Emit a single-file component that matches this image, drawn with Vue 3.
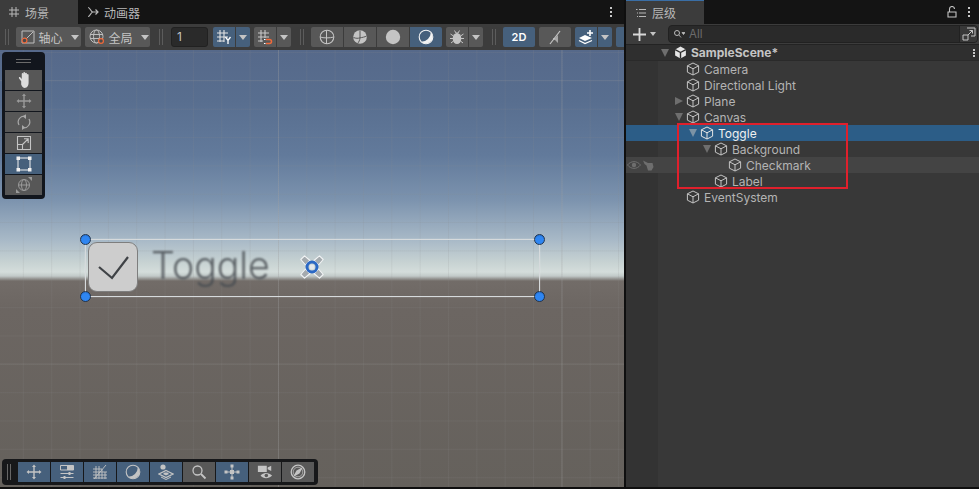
<script setup>
const rows = [
  { name: 'Camera', depth: 0 },
  { name: 'Directional Light', depth: 0 },
  { name: 'Plane', depth: 0, arrow: 'right' },
  { name: 'Canvas', depth: 0, arrow: 'down' },
  { name: 'Toggle', depth: 1, arrow: 'down', selected: true },
  { name: 'Background', depth: 2, arrow: 'down' },
  { name: 'Checkmark', depth: 3, hover: true },
  { name: 'Label', depth: 2 },
  { name: 'EventSystem', depth: 0 }
]

const tools = ['hand', 'move', 'rotate', 'scale', 'rect', 'transform']
const overlays = [
  { icon: 'move', on: true },
  { icon: 'sliders', on: true },
  { icon: 'gridsnap', on: true },
  { icon: 'moon', on: true },
  { icon: 'layers', on: true },
  { icon: 'search', on: false },
  { icon: 'nodes', on: true },
  { icon: 'camera', on: false },
  { icon: 'compass', on: false }
]
const shading = [
  { icon: 'wire', on: false },
  { icon: 'shaded', on: false },
  { icon: 'disc', on: false },
  { icon: 'moon', on: true }
]
const handles = [
  { left: '85px', top: '239px' },
  { left: '539px', top: '239px' },
  { left: '85px', top: '296px' },
  { left: '539px', top: '296px' }
]
</script>

<template>
  <div class="editor">
    <svg class="defs" width="0" height="0">
      <symbol id="cube" viewBox="0 0 14 14">
        <path d="M7 1 12.6 3.8V10.2L7 13 1.4 10.2V3.8ZM1.4 3.8 7 6.8 12.6 3.8M7 6.8V13" fill="none" stroke="currentColor" stroke-width="1" />
      </symbol>
      <symbol id="hand" viewBox="1 0 12 16">
        <path d="M4.500 9 2.600 6.600C2 5.700 3 5 3.700 5.600L5 7V2.600C5 1.500 6.300 1.500 6.400 2.600V1.700C6.400.6 7.900.6 8 1.700V2.300C8.100 1.300 9.500 1.300 9.600 2.400V3.400C9.700 2.500 11 2.500 11.100 3.500V10C11.100 13 10 15 7.500 15 5.700 15 5.200 13.500 4.500 12Z" fill="currentColor" />
      </symbol>
      <symbol id="move" viewBox="0 0 16 16">
        <path d="M8 3V13M3 8H13" stroke="currentColor" stroke-width="1.400" />
        <path d="M8 .5 10 3H6ZM8 15.500 6 13H10ZM.5 8 3 6V10ZM15.500 8 13 10V6Z" fill="currentColor" />
      </symbol>
      <symbol id="rotate" viewBox="0 0 16 16">
        <path d="M3 11A6 6 0 0 1 9.500 2.200M13 5A6 6 0 0 1 6.500 13.800" fill="none" stroke="currentColor" stroke-width="1.200" />
        <path d="M10 .2V5L6.800 2.500ZM6 11 9.200 13.500 6 16Z" fill="currentColor" />
      </symbol>
      <symbol id="scale" viewBox="0 0 16 16">
        <path d="M1.500 1.500H14.500V14.500H1.500ZM1.500 9.500H6.500V14.500M6.500 9.500 12 4M8 3.800H12.200V8" fill="none" stroke="currentColor" stroke-width="1.100" />
      </symbol>
      <symbol id="rect" viewBox="0 0 16 16">
        <path d="M2 2H14V14H2Z" fill="none" stroke="currentColor" stroke-width="1" />
        <path d="M.5.5H4V4H.5ZM12 .5H15.500V4H12ZM.5 12H4V15.500H.5ZM12 12H15.500V15.500H12Z" fill="currentColor" />
      </symbol>
      <symbol id="transform" viewBox="0 0 16 16">
        <circle cx="8" cy="8" r="5.500" fill="none" stroke="currentColor" />
        <ellipse cx="8" cy="8" rx="2.500" ry="5.500" fill="none" stroke="currentColor" />
        <path d="M2.500 8H13.500" stroke="currentColor" />
        <path d="M0 16V12L4 16ZM16 0V4L12 0Z" fill="currentColor" />
      </symbol>
      <symbol id="sliders" viewBox="0 0 16 16">
        <path d="M1.500 1.500H14.500V6H1.500Z" fill="none" stroke="currentColor" />
        <path d="M8 1.500H14.500V6H8Z" fill="currentColor" />
        <path d="M1.500 9.500H14.500M1.500 13.500H14.500" stroke="currentColor" />
        <path d="M9.500 8H11.500V11H9.500ZM4.500 12H6.500V15H4.500Z" fill="currentColor" />
      </symbol>
      <symbol id="gridsnap" viewBox="0 0 16 16">
        <path d="M4 2V15M7 2V15M10 5V15M13 8V15M1 5H10M1 8H15M1 11H15M1 14H15M2 15 14 1" fill="none" stroke="currentColor" stroke-width=".9" />
      </symbol>
      <symbol id="moon" viewBox="0 0 16 16">
        <circle cx="8" cy="8" r="6.800" fill="none" stroke="currentColor" stroke-width="1.100" />
        <path d="M12.800 3.200A6.800 6.800 0 0 1 3.200 12.800 9.650 9.650 0 0 0 12.800 3.200Z" fill="currentColor" />
      </symbol>
      <symbol id="layers" viewBox="0 0 16 16">
        <circle cx="5" cy="3" r="2.600" fill="currentColor" />
        <path d="M8 6.500 15 10 8 13.500 1 10Z" fill="none" stroke="currentColor" stroke-width="1.300" />
        <path d="M6.500 8.500 9.500 8.500 11 10 8 11.500 5 10Z" fill="currentColor" />
        <path d="M3 13 8 15.500 13 13" fill="none" stroke="currentColor" />
      </symbol>
      <symbol id="search" viewBox="0 0 16 16">
        <circle cx="6.500" cy="6.500" r="4.500" fill="none" stroke="currentColor" stroke-width="1.300" />
        <path d="M10 10 14.500 14.500" stroke="currentColor" stroke-width="1.800" />
      </symbol>
      <symbol id="nodes" viewBox="0 0 16 16">
        <path d="M8 8H1M8 8H15M8 8V1M8 8V15" stroke="currentColor" />
        <path d="M6 6H10V10H6ZM6.500 .5H9.500V3.500H6.500ZM6.500 12.500H9.500V15.500H6.500ZM.5 6.500H3.500V9.500H.5ZM12.500 6.500H15.500V9.500H12.500Z" fill="currentColor" />
      </symbol>
      <symbol id="camera" viewBox="0 0 18 16">
        <path d="M1 1H11V8H1ZM12 3 16 1V7L12 5Z" fill="currentColor" />
        <path d="M4 12C7 8 13 8 17 12 13 16 7 16 4 12Z" fill="currentColor" />
        <circle cx="10.500" cy="12" r="2" fill="#585858" />
      </symbol>
      <symbol id="compass" viewBox="0 0 16 16">
        <circle cx="8" cy="8" r="6.800" fill="none" stroke="currentColor" stroke-width="1.300" />
        <path d="M13 3 9.500 9.500 3 13 6.500 6.500Z" fill="currentColor" />
        <circle cx="8" cy="8" r="4.800" fill="none" stroke="currentColor" stroke-width=".7" />
      </symbol>
      <symbol id="wire" viewBox="0 0 16 16">
        <circle cx="8" cy="8" r="6.800" fill="none" stroke="currentColor" stroke-width="1.100" />
        <path d="M7.500 1.200V15M1.200 8C4 9.200 11 9.200 14.800 8" fill="none" stroke="currentColor" stroke-width="1" />
      </symbol>
      <symbol id="shaded" viewBox="0 0 16 16">
        <circle cx="8" cy="8" r="6.800" fill="currentColor" />
        <path d="M1.500 8.500C4 9.500 6 9.500 8 8.800V1.500M8 8.800C7.800 11 7 13 5.500 14.500M8 8.800C10 8.500 13 8 14.500 7" fill="none" stroke="#585858" stroke-width="1" />
      </symbol>
      <symbol id="disc" viewBox="0 0 16 16">
        <circle cx="8" cy="8" r="7.200" fill="currentColor" />
      </symbol>
    </svg>

    <section class="scene-panel">
      <div class="tabs">
        <div class="tab active first-tab">
          <svg class="tab-icon" viewBox="0 0 12 12"><path d="M1 4H11M1 8H11M4 1V11M8 1V11" stroke="currentColor" fill="none" /></svg>
          <span>场景</span>
        </div>
        <div class="tab">
          <svg class="tab-icon" viewBox="0 0 12 12"><path d="M1 1.500C3.500 1.500 3.500 6 6 6S9 6 11 6M1 10.500C3.500 10.500 3.500 6 6 6M8.500 3.500 11 6 8.500 8.500" stroke="currentColor" fill="none" stroke-width="1.200" /></svg>
          <span>动画器</span>
        </div>
        <div class="tab-spacer"></div>
        <div class="kebab top-kebab"><i></i><i></i><i></i></div>
      </div>

      <div class="toolbar">
        <span class="grip"></span>
        <button class="tb drop wide">
          <svg class="i14" viewBox="0 0 14 14">
            <path d="M1 1H13V13H1Z" fill="none" stroke="#bdbdbd" />
            <path d="M3 11 12 2" stroke="#bdbdbd" />
            <circle cx="3.500" cy="10.500" r="2.400" fill="#4a4a4a" stroke="#f0693a" stroke-width="1.200" />
          </svg>
          <span>轴心</span>
          <b class="caret"></b>
        </button>
        <button class="tb drop wide">
          <svg class="i16" viewBox="0 0 16 16">
            <circle cx="7.500" cy="7.500" r="6.500" fill="none" stroke="#bdbdbd" />
            <ellipse cx="7.500" cy="7.500" rx="3" ry="6.500" fill="none" stroke="#bdbdbd" />
            <path d="M1 5.500H14M1 9.500H14" stroke="#bdbdbd" />
            <circle cx="12" cy="12" r="2.400" fill="#4a4a4a" stroke="#f0693a" stroke-width="1.200" />
          </svg>
          <span>全局</span>
          <b class="caret"></b>
        </button>
        <span class="grip gap-l"></span>
        <div class="num">1</div>
        <div class="split">
          <button class="tb on first">
            <svg class="i16" viewBox="0 0 16 16"><path d="M4 1V13M8 1V13M1 4H12M1 8H12M1 12H8" stroke="#e4e4e4" stroke-width="1.100" fill="none" /><path d="M9.500 8 12 11.500 14.500 8M12 11.500V15" stroke="#fff" stroke-width="1.300" fill="none" /></svg>
          </button>
          <button class="tb on last"><b class="caret"></b></button>
        </div>
        <div class="split">
          <button class="tb first">
            <svg class="i16" viewBox="0 0 16 16"><path d="M4 1V13M8 1V9M1 4H12M1 8H12M1 12H6" stroke="#c8c8c8" stroke-width="1.100" fill="none" /><path d="M9 10.500H12.500A1.700 1.700 0 0 1 12.500 14.500H9" stroke="#f0693a" stroke-width="1.500" fill="none" /><path d="M7 10H8.500V11H7ZM7 14H8.500V15H7Z" fill="#fff" /></svg>
          </button>
          <button class="tb last"><b class="caret"></b></button>
        </div>
        <span class="grip gap-m"></span>
        <div class="group">
          <button v-for="s in shading" :key="s.icon" class="tb shade" :class="{ on: s.on }">
            <svg class="i16 ic"><use :href="'#' + s.icon" /></svg>
          </button>
        </div>
        <div class="split">
          <button class="tb first">
            <svg class="i16 ic" viewBox="0 0 16 16"><path d="M5.500 1.500 7 4H9L10.500 1.500M1.500 5 4.500 7M14.500 5 11.500 7M1 9.500H4M15 9.500H12M2 14 4.500 12M14 14 11.500 12" stroke="currentColor" fill="none" /><ellipse cx="8" cy="9.500" rx="4.300" ry="5.500" fill="currentColor" /></svg>
          </button>
          <button class="tb last"><b class="caret"></b></button>
        </div>
        <span class="grip gap-m"></span>
        <button class="tb on label2d">2D</button>
        <button class="tb audio">
          <svg class="i16" viewBox="0 0 16 16"><path d="M6 11H8L11 14V6L8 9H6Z" fill="#a8a8a8" /><path d="M3 15 13 2" stroke="#c4c4c4" stroke-width="1.200" /></svg>
        </button>
        <div class="split">
          <button class="tb on first">
            <svg class="i16" viewBox="0 0 16 16"><path d="M1 11.500 7 14.500 14 11.500" fill="none" stroke="#fff" stroke-width="1.300" /><path d="M7 6 14 9 7 12 1 9Z" fill="#fff" /><path d="M12 1V7M9 4H15" stroke="#fff" stroke-width="1.600" /></svg>
          </button>
          <button class="tb on last"><b class="caret"></b></button>
        </div>
        <button class="tb on stub"></button>
      </div>

      <div class="scene">
        <div class="tools">
          <div class="tools-head"></div>
          <button v-for="t in tools" :key="t" class="tool" :class="[t, { on: t === 'rect' }]">
            <svg class="i16 ic"><use :href="'#' + t" /></svg>
          </button>
        </div>

        <div class="rect-outline"></div>
        <span v-for="(h, i) in handles" :key="i" class="handle" :style="h"></span>

        <div class="toggle-box">
          <svg viewBox="0 0 50 50" width="50" height="50">
            <path d="M11 25 24 36 40 15" fill="none" stroke="#3f4246" stroke-width="2.200" />
          </svg>
        </div>
        <div class="toggle-text">Toggle</div>

        <svg class="pivot" viewBox="0 0 24 24" width="24" height="24">
          <g fill="#a4aaae" stroke="#f2f4f5" stroke-width="1.100" stroke-linejoin="round">
            <path d="M.8 4.500 4.500 .8 10 5.500 5.500 10Z" />
            <path d="M23.200 4.500 19.500 .8 14 5.500 18.500 10Z" />
            <path d="M.8 19.500 4.500 23.200 10 18.500 5.500 14Z" />
            <path d="M23.200 19.500 19.500 23.200 14 18.500 18.500 14Z" />
          </g>
          <circle cx="12" cy="12" r="5" fill="none" stroke="#2b68c4" stroke-width="3" />
          <circle cx="12" cy="12" r="2.400" fill="#e4e8ec" />
        </svg>

        <div class="overlay-bar">
          <span class="bar-grip"></span>
          <button v-for="(o, i) in overlays" :key="i" class="ov" :class="{ on: o.on }">
            <svg class="i16 ic" :viewBox="o.icon === 'camera' ? '0 0 18 16' : '0 0 16 16'"><use :href="'#' + o.icon" /></svg>
          </button>
        </div>
      </div>
    </section>

    <section class="hier-panel">
      <div class="tabs">
        <div class="tab active hier-tab">
          <svg class="tab-icon" viewBox="0 0 12 12"><path d="M4 2.500H11M4 6H11M4 9.500H11" stroke="currentColor" fill="none" /><path d="M1 2.500H2.500M2 6H3M2 9.500H3" stroke="currentColor" /></svg>
          <span>层级</span>
        </div>
        <div class="tab-spacer"></div>
        <svg class="lock" viewBox="0 0 10 12" width="10" height="12"><path d="M1 6H9V11H1ZM2.500 6V3A2.500 2.500 0 0 1 7.500 3" fill="none" stroke="#c4c4c4" stroke-width="1.100" /></svg>
        <div class="kebab"><i></i><i></i><i></i></div>
      </div>
      <div class="hier-tools">
        <div class="plus">
          <svg viewBox="0 0 12 12" width="13" height="13"><path d="M6 0V12M0 6H12" stroke="#d8d8d8" stroke-width="1.700" /></svg>
          <b class="caret"></b>
        </div>
        <div class="search">
          <svg viewBox="0 0 12 10" width="12" height="10"><circle cx="4" cy="4" r="2.500" fill="none" stroke="#bdbdbd" /><path d="M6 6 8 8.500M9 3.500H12L10.500 5.500Z" stroke="#bdbdbd" fill="#bdbdbd" stroke-width=".8" /></svg>
          <span>All</span>
          <div class="search-btn">
            <svg viewBox="0 0 14 14" width="14" height="14"><path d="M5 1H13V9H9M1 8H6V13H1ZM6 8 10.500 3.500M7.500 3.500H10.500V6.500" fill="none" stroke="#c4c4c4" /></svg>
          </div>
        </div>
      </div>
      <div class="tree">
        <div class="scene-row">
          <b class="arrow down root-arrow"></b>
          <svg class="unity" viewBox="0 0 14 14" width="13" height="13">
            <path d="M7 .5 12.800 3.800V10.200L7 13.500 1.200 10.200V3.800Z" fill="#e6e6e6" />
            <path d="M7 7V13.500M7 7 1.200 3.800M7 7 12.800 3.800" stroke="#2d2d2d" stroke-width="1.500" />
          </svg>
          <span>SampleScene*</span>
          <div class="kebab row-kebab"><i></i><i></i><i></i></div>
        </div>
        <div
          v-for="r in rows"
          :key="r.name"
          class="row"
          :class="{ selected: r.selected, hover: r.hover }"
        >
          <div class="gutter">
            <template v-if="r.hover">
              <svg viewBox="0 0 14 10" width="14" height="10"><path d="M.5 5C4 .5 10 .5 13.500 5 10 9.500 4 9.500 .5 5Z" fill="none" stroke="#6e6e6e" /><circle cx="7" cy="5" r="2.200" fill="#6e6e6e" /></svg>
              <svg viewBox="0 0 12 12" width="12" height="12"><path d="M1 1.500 6 4H10.500L11.500 8 9.500 11.500H6L4.500 6.500 2.500 5Z" fill="#6e6e6e" /></svg>
            </template>
          </div>
          <div class="indent" :style="{ width: 14 * r.depth + 'px' }"></div>
          <div class="arrow-cell"><b v-if="r.arrow" class="arrow" :class="r.arrow"></b></div>
          <svg class="cube"><use href="#cube" /></svg>
          <span class="name">{{ r.name }}</span>
        </div>
        <div class="red-box"></div>
      </div>
    </section>
  </div>
</template>

<style>
html, body {
  margin: 0;
  background: #0f0f0f;
}
</style>

<style scoped>
.editor {
  width: 979px;
  height: 489px;
  display: flex;
  background: #0f0f0f;
  overflow: hidden;
  font-family: Inter, "Noto Sans CJK SC", sans-serif;
  font-size: 12px;
  color: #c4c4c4;
}
.defs {
  position: absolute;
}
button {
  font: inherit;
  color: inherit;
  border: 0;
  padding: 0;
  margin: 0;
}
.i14 { width: 14px; height: 14px; }
.i16 { width: 16px; height: 16px; }
.ic { color: #c4c4c4; }

.scene-panel {
  width: 624px;
  height: 487px;
  display: flex;
  flex-direction: column;
  flex: none;
}
.tabs {
  height: 24px;
  flex: none;
  display: flex;
  align-items: center;
  background: #141414;
}
.tab {
  height: 24px;
  display: flex;
  align-items: center;
  gap: 5px;
  padding: 0 9px;
  color: #b8b8b8;
  box-sizing: border-box;
}
.tab.active {
  background: #3c3c3c;
  width: 78px;
}
.tab.first-tab { padding-left: 8px; }
.tab-icon {
  width: 12px;
  height: 12px;
  flex: none;
}
.tab-spacer { flex: 1; }
.kebab {
  display: flex;
  flex-direction: column;
  gap: 2px;
  width: 14px;
  align-items: center;
  margin-right: 3px;
}
.top-kebab { margin-right: 6px; }
.kebab i {
  width: 2px;
  height: 2px;
  background: #c8c8c8;
}

.toolbar {
  height: 26px;
  flex: none;
  background: #3c3c3c;
  display: flex;
  align-items: center;
  gap: 4px;
  padding-left: 5px;
  overflow: hidden;
}
.grip {
  width: 4px;
  height: 16px;
  flex: none;
  margin-right: 3px;
  border-left: 1px solid #5c5c5c;
  border-right: 1px solid #5c5c5c;
  box-sizing: border-box;
}
.grip.gap-l { margin-left: 5px; margin-right: 4px; }
.grip.gap-m { margin-left: 5px; margin-right: 3px; }
.tb {
  height: 20px;
  background: #585858;
  border-radius: 2px;
  display: flex;
  align-items: center;
  justify-content: center;
  flex: none;
}
.tb.on { background: #46607c; color: #fff; }
.tb.wide {
  width: 65px;
  gap: 3px;
  padding-left: 3px;
  box-sizing: border-box;
  color: #c4c4c4;
}
.tb.wide .caret { margin-left: 5px; }
.caret {
  display: block;
  width: 0;
  height: 0;
  border-left: 4px solid transparent;
  border-right: 4px solid transparent;
  border-top: 5px solid #c4c4c4;
}
.num {
  width: 37px;
  height: 20px;
  box-sizing: border-box;
  flex: none;
  background: #2a2a2a;
  border: 1px solid #212121;
  border-radius: 3px;
  padding-left: 5px;
  line-height: 18px;
  color: #c4c4c4;
  margin-right: 1px;
}
.split {
  display: flex;
  gap: 1px;
  flex: none;
}
.tb.first {
  width: 22px;
  border-radius: 2px 0 0 2px;
}
.tb.last {
  width: 14px;
  border-radius: 0 2px 2px 0;
}
.group {
  display: flex;
  gap: 1px;
  flex: none;
}
.tb.shade {
  width: 32px;
  border-radius: 0;
}
.tb.shade:first-child { border-radius: 2px 0 0 2px; }
.tb.shade:last-child { border-radius: 0 2px 2px 0; }
.tb.shade.on .ic { color: #f2f2f2; }
.label2d {
  width: 32px;
  font-weight: 600;
  font-size: 11px;
}
.audio { width: 32px; }
.stub { width: 12px; }

.scene {
  flex: 1;
  position: relative;
  overflow: hidden;
  background:
    linear-gradient(90deg, rgba(170, 170, 170, 0.24) 1px, transparent 1px) 278px 0 / 283.5px 100%,
    linear-gradient(0deg, rgba(170, 170, 170, 0.12) 1px, transparent 1px) 0 31px / 100% 283.5px,
    linear-gradient(90deg, rgba(140, 140, 140, 0.14) 1px, transparent 1px) 22.85px 0 / 28.35px 100%,
    linear-gradient(0deg, rgba(140, 140, 140, 0.14) 1px, transparent 1px) 0 3px / 100% 28.35px,
    linear-gradient(180deg, #56698a 0, #586e8f 50px, #627a9b 105px, #7c93ae 150px, #a8b9c7 190px, #c8d3d3 213px, #d4dddb 222px, #c2cac9 226px, #726c68 231px, #6c6662 260px, #65615c 100%);
}
.tools {
  position: absolute;
  left: 2px;
  top: 2px;
  width: 43px;
  height: 147px;
  box-sizing: border-box;
  padding: 0 3px;
  background: #12161d;
  border-radius: 4px;
  display: flex;
  flex-direction: column;
  gap: 1px;
}
.tools-head {
  height: 17px;
  flex: none;
  position: relative;
}
.tools-head::before {
  content: "";
  position: absolute;
  left: 11px;
  right: 11px;
  top: 7px;
  height: 2px;
  border-top: 1px solid #6a6a6a;
  border-bottom: 1px solid #6a6a6a;
}
.tool {
  width: 37px;
  height: 20px;
  flex: none;
  background: #575757;
  display: flex;
  align-items: center;
  justify-content: center;
}
.tool.on { background: #46607c; }
.tool.on .ic { color: #f0f0f0; }
.tool.hand .ic { width: 18px; height: 18px; color: #dcdcdc; }
.tool.move .ic,
.tool.transform .ic { color: #9a9a9a; }
.tool.rotate .ic { color: #a8a8a8; }

.rect-outline {
  position: absolute;
  left: 85px;
  top: 189px;
  width: 453px;
  height: 56px;
  border: 1px solid #d6dadc;
  box-shadow: 0 0 1px rgba(255, 255, 255, 0.5);
}
.handle {
  position: absolute;
  width: 9px;
  height: 9px;
  margin: -55px 0 0 -5px;
  border-radius: 50%;
  background: radial-gradient(circle at 50% 65%, #2f86f2 0 55%, #1c5fb8 100%);
  border: 1px solid #1f3450;
}
.toggle-box {
  position: absolute;
  left: 88px;
  top: 192px;
  width: 50px;
  height: 50px;
  box-sizing: border-box;
  background: #cdcdcd;
  border: 1px solid #7e7e7e;
  border-radius: 9px;
  filter: blur(0.4px);
}
.toggle-box svg {
  margin: -1px;
  display: block;
}
.toggle-text {
  position: absolute;
  left: 151px;
  top: 194px;
  font-family: Inter, "Liberation Sans", sans-serif;
  font-weight: 300;
  font-size: 37.500px;
  line-height: 44px;
  color: #474c51;
  filter: blur(0.8px);
  opacity: 0.85;
}
.pivot {
  position: absolute;
  left: 300px;
  top: 205px;
}
.overlay-bar {
  position: absolute;
  left: 2px;
  bottom: 2px;
  width: 316px;
  height: 26px;
  box-sizing: border-box;
  background: #17181a;
  border-radius: 4px;
  display: flex;
  align-items: center;
  padding-left: 5px;
  gap: 1px;
}
.bar-grip {
  width: 4px;
  height: 16px;
  margin-right: 6px;
  border-left: 1px solid #666;
  border-right: 1px solid #666;
  box-sizing: border-box;
}
.ov {
  width: 32px;
  height: 20px;
  background: #585858;
  display: flex;
  align-items: center;
  justify-content: center;
  flex: none;
}
.ov.on { background: #46607c; }

.hier-panel {
  width: 353px;
  height: 487px;
  margin-left: 2px;
  display: flex;
  flex-direction: column;
  background: #383838;
}
.hier-tab {
  border-top: 1px solid #3a6ea5;
}
.lock { margin-right: 5px; }
.hier-tools {
  height: 21px;
  flex: none;
  display: flex;
  align-items: center;
  background: #3c3c3c;
  border-bottom: 1px solid #232323;
  box-sizing: border-box;
}
.plus {
  width: 42px;
  display: flex;
  align-items: center;
  gap: 4px;
  padding-left: 7px;
  box-sizing: border-box;
}
.plus .caret {
  border-left-width: 3px;
  border-right-width: 3px;
  border-top-width: 4px;
}
.search {
  flex: 1;
  height: 16px;
  display: flex;
  align-items: center;
  gap: 4px;
  background: #2a2a2a;
  border: 1px solid #212121;
  border-radius: 4px;
  padding-left: 4px;
  margin-right: 1px;
  font-size: 11.500px;
  color: #6c6c6c;
}
.search span { flex: 1; }
.search-btn {
  width: 17px;
  height: 16px;
  background: #383838;
  display: flex;
  align-items: center;
  justify-content: center;
  border-left: 1px solid #212121;
  border-radius: 0 3px 3px 0;
}
.tree {
  position: relative;
  flex: 1;
  background: linear-gradient(90deg, #333333 0 32px, #383838 32px);
}
.scene-row {
  background: #2f2f2f;
  display: flex;
  align-items: center;
  font-weight: 700;
  color: #c4c4c4;
  border-bottom: 1px solid #2a2a2a;
  height: 15px;
  padding-left: 35px;
  gap: 4px;
}
.root-arrow { margin-right: 1px; }
.row-kebab { margin-left: auto; margin-right: 0; gap: 1px; width: 10px; }
.row {
  height: 16px;
  display: flex;
  align-items: center;
  color: #b4b4b4;
}
.row.selected {
  background: #2c5d87;
  color: #f0f0f0;
}
.row.selected .arrow.down { border-top-color: #7c93a5; }
.row.hover {
  background: #444444;
}
.gutter {
  width: 32px;
  flex: none;
  display: flex;
  align-items: center;
  gap: 1px;
  padding-left: 1px;
  box-sizing: border-box;
}
.indent { flex: none; }
.arrow-cell {
  width: 28px;
  flex: none;
  display: flex;
  justify-content: flex-end;
  padding-right: 3px;
  box-sizing: border-box;
}
.arrow {
  display: block;
  width: 0;
  height: 0;
}
.arrow.down {
  border-left: 4px solid transparent;
  border-right: 4px solid transparent;
  border-top: 8px solid #6e6e6e;
}
.arrow.right {
  border-top: 4px solid transparent;
  border-bottom: 4px solid transparent;
  border-left: 8px solid #6e6e6e;
}
.cube {
  width: 14px;
  height: 14px;
  flex: none;
  color: #c4c4c4;
}
.row.selected .cube { color: #e4e4e4; }
.name { margin-left: 4px; }
.red-box {
  position: absolute;
  left: 51px;
  top: 78px;
  width: 171px;
  height: 66px;
  box-sizing: border-box;
  border: 2px solid #e0202c;
  pointer-events: none;
}
</style>
